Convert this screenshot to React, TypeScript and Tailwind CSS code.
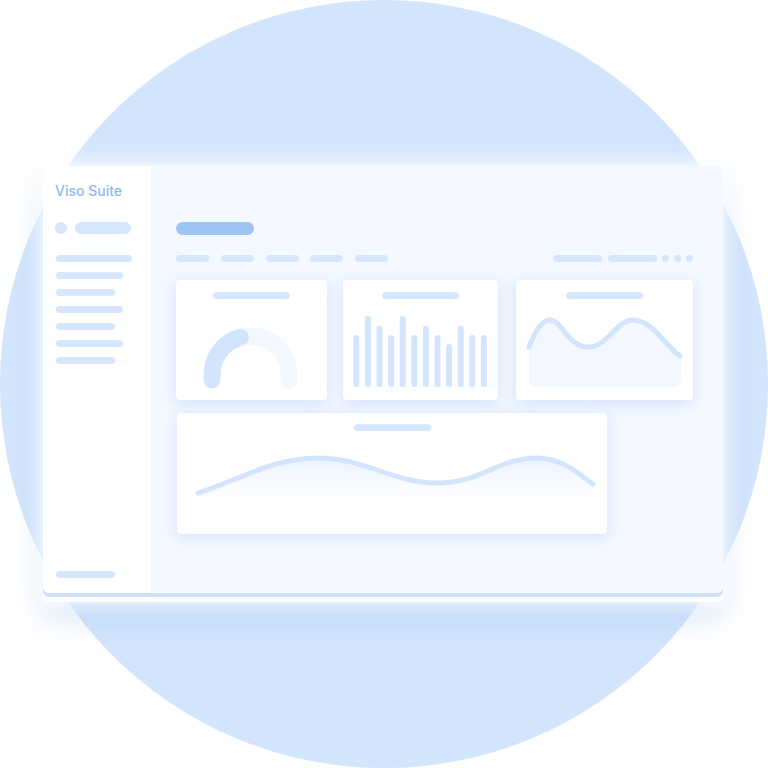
import React from 'react';

const Pill = ({ w, h = 7, color = 'bg-[#d5e6fd]' }: { w: number; h?: number; color?: string }) => (
  <div className={`rounded-full ${color}`} style={{ width: w, height: h }} />
);

const sideLines = [76, 67, 59, 67, 59, 67, 59];
const bars = [36, 17, 26.7, 36, 17, 36, 26.7, 36, 45, 26.7, 36, 36];

const cardCls =
  'bg-white rounded-[4px] shadow-[0_3px_14px_rgba(180,208,250,0.55)] flex flex-col items-center';

const App: React.FC = () => {
  return (
    <div className="w-[768px] h-[768px] bg-white overflow-hidden">
      <div className="w-[768px] h-[768px] rounded-full bg-[#d3e5fd] pt-[166px] pl-[43px]">
        {/* window */}
        <div className="w-[680px] h-[436px] bg-white rounded-[6px] pb-[9px] flex flex-col shadow-[0_0_18px_6px_rgba(255,255,255,0.85),0_14px_30px_rgba(120,165,235,0.35)]">
          <div className="flex-1 flex rounded-[6px] overflow-hidden shadow-[0_4px_0_#cfe0fb]">
            {/* sidebar */}
            <aside className="w-[108px] bg-white flex flex-col pl-[12px] pt-[17px] pb-[15px]">
              <div className="text-[14px] leading-[16px] font-medium text-[#8db9f3] font-['Inter',sans-serif]">
                Viso Suite
              </div>
              <div className="flex items-center gap-[8px] mt-[23px]">
                <div className="w-[12px] h-[12px] rounded-full bg-[#d5e6fd]" />
                <Pill w={56} h={12} />
              </div>
              <div className="flex flex-col gap-[10px] mt-[21px] pl-[1px]">
                {sideLines.map((w, i) => (
                  <Pill key={i} w={w} />
                ))}
              </div>
              <div className="flex-1" />
              <div className="pl-[1px]">
                <Pill w={59} />
              </div>
            </aside>

            {/* main */}
            <main className="flex-1 bg-[#f4f8ff] pl-[25px] pr-[30px] pt-[56px] flex flex-col">
              <Pill w={78} h={13} color="bg-[#a0c4f2]" />
              <div className="flex items-center mt-[20px]">
                <div className="flex gap-[11.75px]">
                  {[33, 33, 33, 33, 33].map((w, i) => (
                    <Pill key={i} w={w} />
                  ))}
                </div>
                <div className="flex-1" />
                <div className="flex items-center gap-[6px]">
                  <Pill w={49} />
                  <Pill w={49} />
                  <div className="flex gap-[5px] ml-[-1px]">
                    <Pill w={7} />
                    <Pill w={7} />
                    <Pill w={7} />
                  </div>
                </div>
              </div>

              {/* cards row */}
              <div className="flex mt-[18px]">
                <div className={`${cardCls} w-[151px] h-[120px] pt-[12px]`}>
                  <Pill w={77} />
                  <svg width="151" height="101" viewBox="0 0 151 101">
                    <path
                      d="M36 81 L36 75.5 A38.5 38.5 0 0 1 113 75.5 L113 81"
                      fill="none"
                      stroke="#f3f7ff"
                      strokeWidth="17"
                      strokeLinecap="round"
                    />
                    <path
                      d="M36 81 L36 75.5 A38.5 38.5 0 0 1 64.5 38.3"
                      fill="none"
                      stroke="#d3e5fd"
                      strokeWidth="17"
                      strokeLinecap="round"
                    />
                  </svg>
                </div>

                <div className={`${cardCls} w-[155px] h-[120px] pt-[12px] ml-[16px]`}>
                  <Pill w={77} />
                  <svg width="155" height="101" viewBox="0 0 155 101">
                    {bars.map((top, i) => (
                      <rect
                        key={i}
                        x={10.3 + i * 11.6}
                        y={top}
                        width="6"
                        height={88 - top}
                        rx="3"
                        fill="#d3e5fd"
                      />
                    ))}
                  </svg>
                </div>

                <div className={`${cardCls} w-[177px] h-[120px] pt-[12px] ml-[18px]`}>
                  <Pill w={77} />
                  <svg width="177" height="101" viewBox="0 0 177 101">
                    <path
                      d="M13 48 C20 30 26 21 34 21 C46 21 52 48 72 48 C92 48 100 21 117 21 C136 21 148 45 165 57 L165 80 Q165 88 157 88 L21 88 Q13 88 13 80 Z"
                      fill="#f3f7ff"
                    />
                    <path
                      d="M13 48 C20 30 26 21 34 21 C46 21 52 48 72 48 C92 48 100 21 117 21 C136 21 148 45 164 57"
                      fill="none"
                      stroke="#d3e5fd"
                      strokeWidth="5"
                      strokeLinecap="round"
                    />
                  </svg>
                </div>
              </div>

              {/* big card */}
              <div className={`${cardCls} w-[430px] h-[121px] pt-[11px] mt-[13px] ml-[1px]`}>
                <Pill w={77} />
                <svg width="430" height="103" viewBox="0 0 430 103">
                  <defs>
                    <linearGradient id="bigFill" x1="0" y1="0" x2="0" y2="1">
                      <stop offset="0" stopColor="#eaf2ff" stopOpacity="1" />
                      <stop offset="1" stopColor="#ffffff" stopOpacity="0" />
                    </linearGradient>
                  </defs>
                  <path
                    d="M21 62 C60 50 95 27 140 27 C190 27 215 52 260 52 C305 52 320 27 360 27 C385 27 400 42 416 53 L416 88 L21 88 Z"
                    fill="url(#bigFill)"
                  />
                  <path
                    d="M21 62 C60 50 95 27 140 27 C190 27 215 52 260 52 C305 52 320 27 360 27 C385 27 400 42 416 53"
                    fill="none"
                    stroke="#d3e5fd"
                    strokeWidth="5"
                    strokeLinecap="round"
                  />
                </svg>
              </div>
            </main>
          </div>
        </div>
      </div>
    </div>
  );
};

export default App;
